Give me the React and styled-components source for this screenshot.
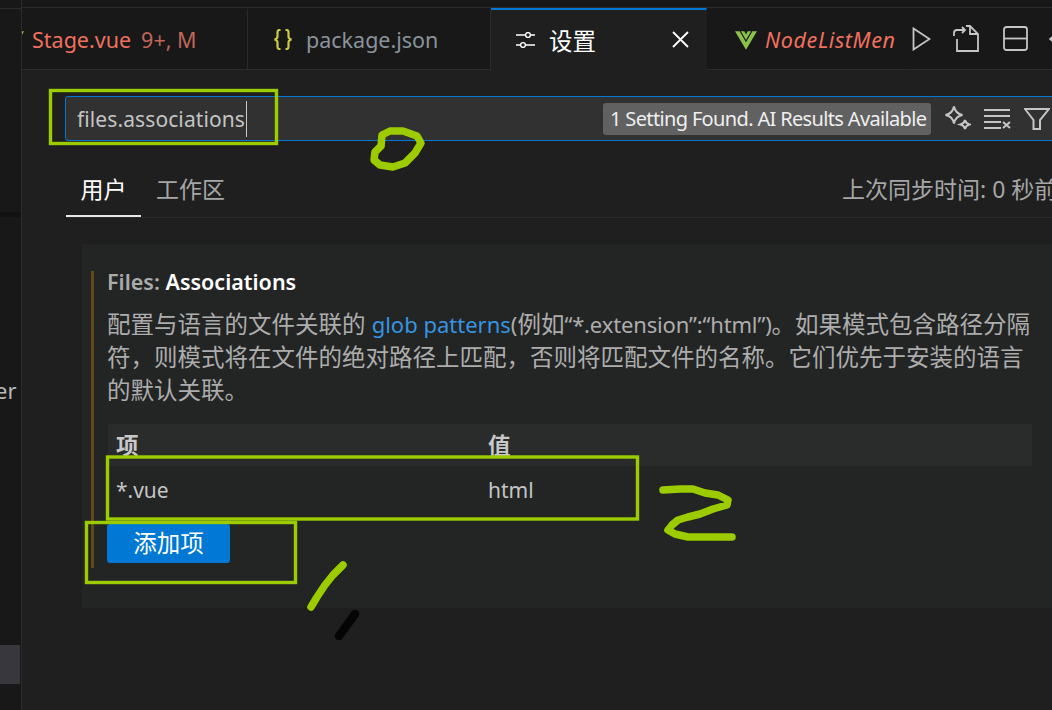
import styled, { createGlobalStyle } from 'styled-components';

const GlobalStyle = createGlobalStyle`
	html, body {
		margin: 0;
		padding: 0;
		background: #1f1f1f;
	}
`;

const Window = styled.div`
	position: relative;
	display: flex;
	width: 1052px;
	height: 710px;
	overflow: hidden;
	background: #1f1f1f;
	color: #cccccc;
	font-family: 'Noto Sans', 'Noto Sans CJK SC', sans-serif;
	font-size: 21.5px;
`;

const Sidebar = styled.aside`
	display: flex;
	flex-direction: column;
	flex: 0 0 21px;
	border-right: 1px solid #2b2b2b;
	background: #181818;
	overflow: hidden;
`;

const SideTop = styled.div`
	height: 204px;
	margin-top: 8px;
	border-top: 1px solid #2b2b2b;
	box-sizing: border-box;
`;

const SideDivider = styled.div`
	height: 5px;
	background: #121212;
`;

const SideClip = styled.div`
	height: 33px;
	margin-top: 157px;
	color: #b8b8b8;
	font-size: 22px;
	line-height: 33px;
	white-space: nowrap;
	text-indent: -5px;
`;

const SideSelected = styled.div`
	flex: none;
	width: 20px;
	height: 39px;
	margin-top: 238px;
	background: #37373d;
`;

const Main = styled.main`
	display: flex;
	flex-direction: column;
	flex: 1;
	min-width: 0;
`;

const TopStrip = styled.div`
	height: 7px;
	border-bottom: 1px solid #2b2b2b;
	background: #181818;
`;

const TabBar = styled.div`
	display: flex;
	height: 62px;
	background: #181818;
`;

const Tab = styled.div`
	display: flex;
	flex: 0 0 ${(props) => props.$width}px;
	align-items: center;
	box-sizing: border-box;
	height: 62px;
	padding-left: ${(props) => props.$pad || 0}px;
	overflow: hidden;
	border-right: 1px solid ${(props) => (props.$active ? '#1f1f1f' : props.$open ? 'transparent' : '#2b2b2b')};
	border-bottom: 1px solid ${(props) => (props.$active ? '#1f1f1f' : '#2b2b2b')};
	border-top: 2px solid ${(props) => (props.$active ? '#0078d4' : 'transparent')};
	background: ${(props) => (props.$active ? '#1f1f1f' : '#181818')};
	white-space: nowrap;
`;

const TabName = styled.span`
	margin-left: ${(props) => props.$gap || 0}px;
	color: ${(props) => props.$color};
	font-size: ${(props) => props.$size || 21.5}px;
	font-style: ${(props) => (props.$italic ? 'italic' : 'normal')};
	letter-spacing: ${(props) => props.$track || 0}px;
`;

const TabTools = styled.div`
	display: flex;
	flex: 1;
	align-items: center;
	box-sizing: border-box;
	height: 62px;
	border-bottom: 1px solid #2b2b2b;
	overflow: hidden;
`;

const Icon = styled.svg`
	display: block;
	flex: none;
	margin-left: ${(props) => props.$left || 0}px;
	fill: none;
	stroke: ${(props) => props.$stroke || '#c5c5c5'};
	stroke-width: ${(props) => props.$weight || 1.6};
`;

const LogoIcon = styled.svg`
	display: block;
	flex: none;
	margin-left: ${(props) => props.$left || 0}px;
	fill: #8dc149;
`;

const SearchBox = styled.div`
	display: flex;
	flex: none;
	align-items: center;
	box-sizing: border-box;
	width: 1010px;
	height: 45px;
	margin: 26px 0 0 43px;
	padding-left: 11px;
	border: 1px solid #0078d4;
	border-radius: 3px;
	background: #313131;
`;

const SearchText = styled.span`
	color: #c4c4c4;
	font-size: 21px;
	letter-spacing: 0.1px;
	white-space: nowrap;
`;

const Caret = styled.span`
	flex: none;
	width: 1px;
	height: 36px;
	margin-left: 1px;
	background: #c8c8c8;
`;

const ResultBadge = styled.span`
	flex: none;
	height: 32px;
	margin-left: 356px;
	padding: 0 5px 0 7px;
	border-radius: 3px;
	background: #616161;
	color: #efefef;
	font-size: 20px;
	line-height: 32px;
	letter-spacing: -0.65px;
	white-space: nowrap;
`;

const SearchIcons = styled.div`
	display: flex;
	align-items: center;
	gap: 13px;
	margin-left: 13px;
`;

const ScopeRow = styled.div`
	display: flex;
	flex: none;
	align-items: stretch;
	box-sizing: border-box;
	height: 77px;
	margin-left: 44px;
	padding-top: 24px;
	border-bottom: 1px solid #2b2b2b;
	white-space: nowrap;
`;

const ScopeTab = styled.div`
	display: flex;
	align-items: center;
	justify-content: center;
	box-sizing: border-box;
	width: ${(props) => props.$width}px;
	height: 52px;
	margin-bottom: -1px;
	padding-bottom: 4px;
	border-bottom: 2px solid ${(props) => (props.$active ? '#e7e7e7' : 'transparent')};
	color: ${(props) => (props.$active ? '#ffffff' : '#a6a6a6')};
	font-size: 23px;
`;

const SyncNote = styled.div`
	flex: none;
	width: 210px;
	margin-left: auto;
	padding-top: 8px;
	overflow: hidden;
	color: #a6a6a6;
	font-size: 23px;
	line-height: 32px;
`;

const Card = styled.section`
	display: flex;
	flex: none;
	box-sizing: border-box;
	width: 970px;
	height: 364px;
	margin: 26px 0 0 60px;
	padding: 27px 20px 40px 9px;
	background: #232525;
`;

const Marker = styled.div`
	flex: 0 0 3px;
	background: #604b1c;
`;

const Setting = styled.div`
	display: flex;
	flex-direction: column;
	flex: 1;
	min-width: 0;
	padding-left: 13px;
`;

const Title = styled.div`
	height: 24px;
	color: #ababab;
	font-weight: 600;
	font-size: 21.5px;
	line-height: 22px;
	white-space: nowrap;
`;

const TitleName = styled.span`
	color: #ffffff;
`;

const Description = styled.p`
	margin: 13px 0 0;
	color: #adadad;
	font-size: 23.5px;
	line-height: 33px;
	white-space: nowrap;
`;

const Latin = styled.span`
	font-size: 22px;
	letter-spacing: ${(props) => props.$track || 0}px;
`;

const DocLink = styled(Latin)`
	color: #3794e0;
`;

const Table = styled.div`
	width: 924px;
	margin: 17px 0 0 1px;
`;

const TableRow = styled.div`
	display: grid;
	grid-template-columns: 372px 1fr;
	box-sizing: border-box;
	height: ${(props) => props.$height}px;
	padding-left: 8px;
	background: ${(props) => (props.$head ? '#2a2c2b' : 'transparent')};
	color: ${(props) => (props.$head ? '#c8c8c8' : '#c4c4c4')};
	font-weight: ${(props) => (props.$head ? 700 : 400)};
	font-size: ${(props) => (props.$head ? 22.5 : 21)}px;
	line-height: ${(props) => props.$line}px;
`;

const AddButton = styled.button`
	display: block;
	width: 123px;
	height: 39px;
	margin: 11px 0 0;
	padding: 0;
	border: 0;
	border-radius: 3px;
	background: #0078d4;
	color: #ffffff;
	font-family: inherit;
	font-size: 23.5px;
	line-height: 39px;
`;

const Annotations = styled.svg`
	position: absolute;
	top: 0;
	left: 0;
	width: 1052px;
	height: 710px;
	fill: none;
	pointer-events: none;
`;

const Box = styled.rect`
	stroke: #9ccc00;
	stroke-width: 3.4;
`;

const Stroke = styled.path`
	stroke: ${(props) => props.$color || '#9ccc00'};
	stroke-width: ${(props) => props.$weight || 7.5};
	stroke-linecap: round;
	stroke-linejoin: round;
`;

const VueLogo = ({ left }) => (
	<LogoIcon $left={left} width="22" height="20" viewBox="0 0 24 21">
		<path d="M0 1h5l7 12L19 1h5L12 21z" />
		<path d="M6.500 1h3.700L12 4.400 13.800 1h3.700L12 10.600z" />
	</LogoIcon>
);

function App() {
	return (
		<Window>
			<GlobalStyle />
			<Sidebar>
				<SideTop />
				<SideDivider />
				<SideClip>er</SideClip>
				<SideSelected />
			</Sidebar>

			<Main>
				<TopStrip />
				<TabBar>
					<Tab $width={226}>
						<VueLogo left={-20} />
						<TabName $gap={8} $color="#f0705f">Stage.vue</TabName>
						<TabName $gap={10} $color="#c0665a">9+, M</TabName>
					</Tab>
					<Tab $width={243} $pad={25}>
						<Icon width="20" height="21" viewBox="0 0 20 21" $stroke="#cbcb41" $weight={2.2}>
							<path d="M7.500 1H6.500C5 1 4.500 2 4.500 3v4.500c0 1.500-.8 2.500-3 3 2.200.5 3 1.500 3 3V18c0 1 .5 2 2 2h1" />
							<path d="M12.500 1h1c1.500 0 2 1 2 2v4.500c0 1.500.8 2.500 3 3-2.200.5-3 1.500-3 3V18c0 1-.5 2-2 2h-1" />
						</Icon>
						<TabName $gap={13} $color="#8a939b">package.json</TabName>
					</Tab>
					<Tab $active $width={216} $pad={25}>
						<Icon width="19" height="16" viewBox="0 0 19 16" $stroke="#ffffff" $weight={1.4}>
							<path d="M0 3h9M15 3h4M0 13h4M10 13h9" />
							<circle cx="12" cy="3" r="2.400" />
							<circle cx="7" cy="13" r="2.400" />
						</Icon>
						<TabName $gap={14} $color="#ffffff" $size={23.5}>设置</TabName>
						<Icon $left={76} width="17" height="17" viewBox="0 0 17 17" $stroke="#ffffff" $weight={1.8}>
							<path d="M1 1l15 15M16 1L1 16" />
						</Icon>
					</Tab>
					<Tab $open $width={205} $pad={28}>
						<VueLogo />
						<TabName $gap={8} $color="#f0705f" $italic $track={0.6}>NodeListMen</TabName>
					</Tab>
					<TabTools>
						<Icon width="19" height="24" viewBox="0 0 19 24" $weight={1.8}>
							<path d="M1.500 1.500v21L17.500 12z" />
						</Icon>
						<Icon $left={21} width="27" height="27" viewBox="0 0 27 27" $weight={1.8}>
							<path d="M5 14v12h21V9l-8-8h-4M18 1v8h8" />
							<path d="M2 11V8a3 3 0 0 1 3-3h8M10 2l3 3-3 3" />
						</Icon>
						<Icon $left={24} width="25" height="25" viewBox="0 0 25 25" $weight={1.8}>
							<rect x="1" y="1" width="23" height="23" rx="2.500" />
							<path d="M1 12.500h23" />
						</Icon>
						<Icon $left={21} width="10" height="24" viewBox="0 0 10 24" $weight={1.8}>
							<path d="M1 12h9M6 8l-5 4 5 4" />
						</Icon>
					</TabTools>
				</TabBar>

				<SearchBox>
					<SearchText>files.associations</SearchText>
					<Caret />
					<ResultBadge>1 Setting Found. AI Results Available</ResultBadge>
					<SearchIcons>
						<Icon width="27" height="27" viewBox="0 0 27 27" $weight={2}>
							<path d="M10 1.500c1 5 3 7.500 8.500 8.500-5.500 1-7.500 3.500-8.500 8.500-1-5-3-7.500-8.500-8.500C7 9 9 6.500 10 1.500z" />
							<path d="M21 15c.5 2.500 1.500 3.700 4.500 4.500-3 .8-4 2-4.500 4.500-.5-2.500-1.500-3.700-4.500-4.500 3-.8 4-2 4.500-4.500z" />
						</Icon>
						<Icon width="27" height="20" viewBox="0 0 27 20" $weight={2}>
							<path d="M0 1h26M0 7h26M0 13h17M0 19h17M19 13l7 6M26 13l-7 6" />
						</Icon>
						<Icon width="26" height="22" viewBox="0 0 26 22" $weight={2}>
							<path d="M1 1h24l-9 11v9H9.500v-9z" />
						</Icon>
					</SearchIcons>
				</SearchBox>

				<ScopeRow>
					<ScopeTab $active $width={75}>用户</ScopeTab>
					<ScopeTab $width={99}>工作区</ScopeTab>
					<SyncNote>上次同步时间: 0 秒前</SyncNote>
				</ScopeRow>

				<Card>
					<Marker />
					<Setting>
						<Title>
							Files: <TitleName>Associations</TitleName>
						</Title>
						<Description>
							配置与语言的文件关联的 <DocLink>glob patterns</DocLink>
							<Latin>(</Latin>例如<Latin $track={-0.15}>“*.extension”:“html”)</Latin>。如果模式包含路径分隔
							<br />
							符，则模式将在文件的绝对路径上匹配，否则将匹配文件的名称。它们优先于安装的语言
							<br />
							的默认关联。
						</Description>
						<Table>
							<TableRow $head $height={42} $line={44}>
								<span>项</span>
								<span>值</span>
							</TableRow>
							<TableRow $height={47} $line={48}>
								<span>*.vue</span>
								<span>html</span>
							</TableRow>
						</Table>
						<AddButton>添加项</AddButton>
					</Setting>
				</Card>
			</Main>

			{/* hand-drawn markup sitting on top of the screenshot */}
			<Annotations viewBox="0 0 1052 710">
				<Box x="50.500" y="90.500" width="226" height="53" />
				<Box x="107.500" y="457" width="530" height="62" />
				<Box x="86.500" y="522.500" width="209" height="60" />
				<Stroke d="M381 146L382 135L390 131L403 131L417 136L421 143L415 153L405 163L393 167L380 165L374 160L375 152L381 146" />
				<Stroke d="M663 490L680 489L693 489L705 493L718 495L728 500L727 505L713 509L700 514L688 517L678 520L672 525L668 530L675 534L688 537L710 537L732 537" />
				<Stroke $weight={7.5} d="M343 565L333 575L325 585L317 597L311 607" />
				<Stroke $color="#050505" $weight={8.5} d="M355 614L347 625L339 636" />
			</Annotations>
		</Window>
	);
}

export default App;
